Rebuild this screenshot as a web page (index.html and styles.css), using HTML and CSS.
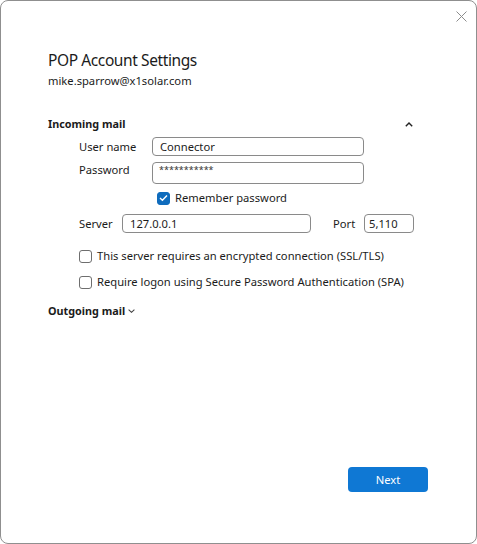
FILE: index.html
```html
<!DOCTYPE html>
<html lang="en">
<head>
<meta charset="UTF-8" />
<title>POP Account Settings</title>
<link rel="stylesheet" href="styles.css">
</head>
<body>

<div class="dialog">
  <div class="titlebar">
    <button class="close" aria-label="Close">
      <svg width="11" height="11" viewBox="0 0 11 11"><path d="M0.5 0.5 L10.5 10.5 M10.5 0.5 L0.5 10.5" stroke="#8c8c8c" stroke-width="1" fill="none"/></svg>
    </button>
  </div>

  <h1>POP Account Settings</h1>
  <div class="account">mike.sparrow@x1solar.com</div>

  <div class="section-head">
    <span>Incoming mail</span>
    <svg class="chev" width="8" height="5" viewBox="0 0 8 5"><path d="M0.8 4.2 L4 1 L7.2 4.2" stroke="#222" stroke-width="1.4" fill="none"/></svg>
  </div>

  <div class="section">
    <div class="row">
      <label class="label">User name</label>
      <div class="field wide">Connector</div>
    </div>
    <div class="row row-pass">
      <label class="label">Password</label>
      <div class="field wide tall secret">***********</div>
    </div>
    <div class="check-row remember">
      <span class="box checked">
        <svg width="9" height="8" viewBox="0 0 9 8"><path d="M1 4 L3.4 6.3 L8 1.4" stroke="#fff" stroke-width="1.4" fill="none"/></svg>
      </span>
      <span>Remember password</span>
    </div>
    <div class="row server-row">
      <label class="label-short">Server</label>
      <div class="field server">127.0.0.1</div>
      <label class="port-label">Port</label>
      <div class="field port">5,110</div>
    </div>

    <div class="options">
      <div class="check-row">
        <span class="box"></span>
        <span>This server requires an encrypted connection (SSL/TLS)</span>
      </div>
      <div class="check-row">
        <span class="box"></span>
        <span>Require logon using Secure Password Authentication (SPA)</span>
      </div>
    </div>
  </div>

  <div class="section-head collapsed">
    <span>Outgoing mail</span>
    <svg class="chev-down" width="7" height="4" viewBox="0 0 7 4"><path d="M0.6 0.6 L3.5 3.3 L6.4 0.6" stroke="#444" stroke-width="1.1" fill="none"/></svg>
  </div>

  <div class="footer">
    <button class="primary">Next</button>
  </div>
</div>

</body>
</html>
```

FILE: styles.css
```css
html, body {
  margin: 0;
  padding: 0;
  background: #fff;
}
body {
  font-family: 'Noto Sans', 'Open Sans', sans-serif;
  font-size: 11.2px;
  color: #1b1b1b;
}
.dialog {
  box-sizing: border-box;
  width: 477px;
  height: 544px;
  border: 1px solid #8f8f8f;
  border-radius: 8px;
  background: #fff;
  display: flex;
  flex-direction: column;
  padding: 0 0 0 47px;
}
.titlebar {
  display: flex;
  justify-content: flex-end;
  height: 42px;
}
.close {
  background: none;
  border: none;
  padding: 0;
  width: 30px;
  height: 30px;
  display: flex;
  align-items: center;
  justify-content: center;
  cursor: pointer;
}
h1 {
  margin: 6px 0 0;
  font-size: 15.5px;
  font-weight: 400;
  letter-spacing: -0.4px;
  line-height: 22px;
}
.account {
  margin-top: 1px;
  line-height: 18px;
}
.section-head {
  display: flex;
  align-items: center;
  width: 365px;
  margin-top: 25px;
  font-size: 10.8px;
  font-weight: bold;
  line-height: 18px;
}
.section-head span {
  flex: 1;
}
.section-head.collapsed span {
  flex: none;
}
.chev-down {
  margin-left: 3px;
}
.section {
  padding-left: 31px;
}
.row {
  display: flex;
  align-items: center;
  margin-top: 4px;
}
.row-pass {
  align-items: flex-start;
  margin-top: 6px;
}
.label {
  width: 73px;
}
.field {
  box-sizing: border-box;
  height: 19px;
  border: 1px solid #8a8a8a;
  border-radius: 4px;
  padding: 0 7px;
  line-height: 17px;
}
.wide {
  width: 212px;
}
.tall {
  height: 22px;
}
.secret {
  font-size: 9px;
  line-height: 13px;
  padding-left: 6px;
  color: #333;
}
.check-row {
  display: flex;
  align-items: center;
  gap: 5px;
  line-height: 18px;
}
.remember {
  margin: 5px 0 0 78px;
}
.box {
  box-sizing: border-box;
  width: 13px;
  height: 13px;
  border: 1px solid #6e6e6e;
  border-radius: 3px;
  display: flex;
  align-items: center;
  justify-content: center;
}
.box.checked {
  background: #0f6cbd;
  border-color: #0f6cbd;
}
.server-row {
  margin-top: 7px;
}
.label-short {
  width: 43px;
}
.server {
  width: 189px;
}
.port-label {
  margin-left: 22px;
  width: 31px;
}
.port {
  width: 50px;
  padding: 0 4px;
}
.options {
  margin-top: 14px;
  display: flex;
  flex-direction: column;
  gap: 8px;
}
.collapsed {
  margin-top: 11px;
}
.footer {
  margin-top: auto;
  margin-bottom: 51px;
  display: flex;
  justify-content: flex-end;
  padding-right: 48px;
}
.primary {
  width: 80px;
  height: 25px;
  border: none;
  border-radius: 4px;
  background: #0f78d4;
  color: #fff;
  font-family: 'Noto Sans', 'Open Sans', sans-serif;
  font-size: 11.2px;
  cursor: pointer;
}
```
